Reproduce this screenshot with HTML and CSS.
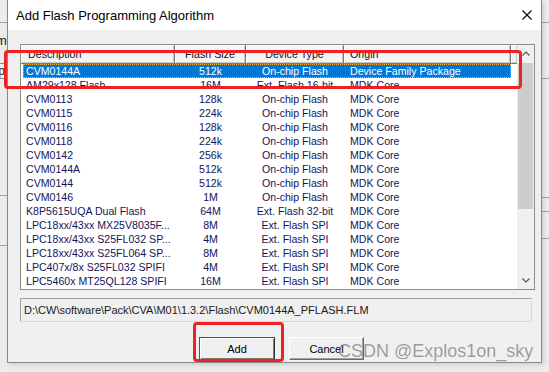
FILE: index.html
```html
<!DOCTYPE html>
<html lang="en">
<head>
  <meta charset="UTF-8" />
  <title>Add Flash Programming Algorithm</title>
  <link rel="stylesheet" href="styles.css">
</head>
<body>
  <div class="desk">
    <!-- bits of the window behind -->
    <div class="bg-line" style="left:0;top:22px;width:7px;"></div>
    <span class="bg-text" style="left:-4px;top:33px;">m</span>
    <div class="bg-box" style="left:-20px;top:63px;"><span>p</span></div>
    <div class="bg-line" style="left:0;top:195px;width:7px;"></div>
    <div class="bg-line" style="left:0;top:245px;width:7px;"></div>
    <div class="bg-line" style="left:542px;top:22px;width:7px;"></div>
    <div class="bg-line" style="left:542px;top:78px;width:7px;"></div>
    <div class="bg-line" style="left:542px;top:197px;width:7px;"></div>
    <div class="bg-line" style="left:542px;top:211px;width:7px;"></div>
    <div class="bg-line" style="left:542px;top:238px;width:7px;"></div>

    <div class="dialog">
      <div class="titlebar">
        <span class="title">Add Flash Programming Algorithm</span>
        <svg class="close" width="10" height="10" viewBox="0 0 10 10">
          <path d="M0.5 0.5 L9.5 9.5 M9.5 0.5 L0.5 9.5" stroke="#000" stroke-width="1.1" fill="none"/>
        </svg>
      </div>

      <div class="body">
        <div class="listbox">
          <div class="lv">
            <div class="hd">
              <div class="hc c1">Description</div>
              <div class="hc c2">Flash Size</div>
              <div class="hc c3">Device Type</div>
              <div class="hc c4">Origin</div>
              <div class="hc c5"></div>
            </div>
            <div class="rows">
              <div class="row sel"><span class="c1">CVM0144A</span><span class="c2">512k</span><span class="c3">On-chip Flash</span><span class="c4">Device Family Package</span></div>
              <div class="row"><span class="c1">AM29x128 Flash</span><span class="c2">16M</span><span class="c3">Ext. Flash 16-bit</span><span class="c4">MDK Core</span></div>
              <div class="row"><span class="c1">CVM0113</span><span class="c2">128k</span><span class="c3">On-chip Flash</span><span class="c4">MDK Core</span></div>
              <div class="row"><span class="c1">CVM0115</span><span class="c2">224k</span><span class="c3">On-chip Flash</span><span class="c4">MDK Core</span></div>
              <div class="row"><span class="c1">CVM0116</span><span class="c2">128k</span><span class="c3">On-chip Flash</span><span class="c4">MDK Core</span></div>
              <div class="row"><span class="c1">CVM0118</span><span class="c2">224k</span><span class="c3">On-chip Flash</span><span class="c4">MDK Core</span></div>
              <div class="row"><span class="c1">CVM0142</span><span class="c2">256k</span><span class="c3">On-chip Flash</span><span class="c4">MDK Core</span></div>
              <div class="row"><span class="c1">CVM0144A</span><span class="c2">512k</span><span class="c3">On-chip Flash</span><span class="c4">MDK Core</span></div>
              <div class="row"><span class="c1">CVM0144</span><span class="c2">512k</span><span class="c3">On-chip Flash</span><span class="c4">MDK Core</span></div>
              <div class="row"><span class="c1">CVM0146</span><span class="c2">1M</span><span class="c3">On-chip Flash</span><span class="c4">MDK Core</span></div>
              <div class="row"><span class="c1">K8P5615UQA Dual Flash</span><span class="c2">64M</span><span class="c3">Ext. Flash 32-bit</span><span class="c4">MDK Core</span></div>
              <div class="row"><span class="c1">LPC18xx/43xx MX25V8035F...</span><span class="c2">8M</span><span class="c3">Ext. Flash SPI</span><span class="c4">MDK Core</span></div>
              <div class="row"><span class="c1">LPC18xx/43xx S25FL032 SP...</span><span class="c2">4M</span><span class="c3">Ext. Flash SPI</span><span class="c4">MDK Core</span></div>
              <div class="row"><span class="c1">LPC18xx/43xx S25FL064 SP...</span><span class="c2">8M</span><span class="c3">Ext. Flash SPI</span><span class="c4">MDK Core</span></div>
              <div class="row"><span class="c1">LPC407x/8x S25FL032 SPIFI</span><span class="c2">4M</span><span class="c3">Ext. Flash SPI</span><span class="c4">MDK Core</span></div>
              <div class="row"><span class="c1">LPC5460x MT25QL128 SPIFI</span><span class="c2">16M</span><span class="c3">Ext. Flash SPI</span><span class="c4">MDK Core</span></div>
            </div>
          </div>
          <div class="sb">
            <div class="sb-btn">
              <svg width="8" height="5" viewBox="0 0 8 5"><path d="M0.5 4.5 L4 1 L7.5 4.5" stroke="#555" stroke-width="1.2" fill="none"/></svg>
            </div>
            <div class="sb-thumb"></div>
            <div class="sb-track"></div>
            <div class="sb-btn">
              <svg width="8" height="5" viewBox="0 0 8 5"><path d="M0.5 0.5 L4 4 L7.5 0.5" stroke="#555" stroke-width="1.2" fill="none"/></svg>
            </div>
          </div>
        </div>

        <div class="path">D:\CW\software\Pack\CVA\M01\1.3.2\Flash\CVM0144A_PFLASH.FLM</div>

        <div class="buttons">
          <button class="btn default">Add</button>
          <button class="btn">Cancel</button>
        </div>
      </div>
    </div>

    <!-- annotations on top of the screenshot -->
    <div class="mark mark-list"></div>
    <div class="mark mark-add"></div>
    <div class="watermark">CSDN @Explos1on_sky</div>
  </div>
</body>
</html>
```

FILE: styles.css
```css
body {
  margin: 0;
  font-family: "Liberation Sans", Arial, sans-serif;
}
.desk {
  position: relative;
  width: 549px;
  height: 372px;
  overflow: hidden;
  background: #ececec;
}
.bg-line {
  position: absolute;
  height: 1px;
  background: #a0a0a0;
}
.bg-text {
  position: absolute;
  font-size: 13px;
  color: #222;
}
.bg-box {
  position: absolute;
  width: 26px;
  height: 14px;
  border: 1px solid #8a8a8a;
  background: #f2f2f2;
  font-size: 12px;
  line-height: 14px;
  text-align: right;
  color: #222;
}
.bg-box span {
  margin-right: 2px;
}

.dialog {
  margin-left: 7px;
  width: 535px;
  height: 363px;
  box-sizing: border-box;
  border: 1px solid #8a8a8a;
  border-top: none;
  background: #f0f0f0;
  display: flex;
  flex-direction: column;
  box-shadow: 2px 2px 4px rgba(0,0,0,0.12);
  position: relative;
}
.titlebar {
  height: 30px;
  flex: none;
  background: #fff;
  display: flex;
  align-items: center;
  justify-content: space-between;
  padding: 0 9px 0 8px;
}
.title {
  font-size: 13px;
  color: #000;
}
.close {
  display: block;
}

.body {
  padding: 14px 0 0 12px;
  display: flex;
  flex-direction: column;
  font-size: 11px;
}

.listbox {
  width: 515px;
  height: 246px;
  box-sizing: border-box;
  border: 1px solid #8c8c8c;
  background: #fff;
  display: flex;
}
.lv {
  width: 496px;
}
.hd {
  display: flex;
  height: 19px;
  background: #f4f4f4;
}
.hc {
  box-sizing: border-box;
  height: 19px;
  line-height: 18px;
  font-size: 10.7px;
  color: #111;
  border-right: 1px solid #7a7a7a;
  border-bottom: 1px solid #7a7a7a;
  box-shadow: inset 1px 1px #fff, inset -1px -1px #c8c8c8;
}
.hd .c1 { width: 154px; padding-left: 7px; }
.hd .c2 { width: 71px; text-align: center; }
.hd .c3 { width: 98px; text-align: center; }
.hd .c4 { width: 167px; padding-left: 6px; }
.hd .c5 { width: 6px; border-right: none; }

.rows {
  padding-left: 2px;
}
.row {
  display: flex;
  height: 14px;
  line-height: 14px;
  width: 488px;
  font-size: 10.6px;
  color: #14145a;
  white-space: nowrap;
}
.row span {
  box-sizing: border-box;
  overflow: hidden;
}
.row .c1 { width: 152px; padding-left: 3px; }
.row .c2 { width: 71px; text-align: center; }
.row .c3 { width: 98px; text-align: center; }
.row .c4 { width: 167px; padding-left: 6px; }
.row.sel {
  background: #0078d7;
  color: #fff;
  outline: 1px dotted #f5b041;
  outline-offset: -1px;
}

.sb {
  width: 17px;
  background: #f0f0f0;
  display: flex;
  flex-direction: column;
}
.sb-btn {
  height: 17px;
  display: flex;
  align-items: center;
  justify-content: center;
}
.sb-thumb {
  margin: 1px 1px 0 1px;
  height: 146px;
  background: #cdcdcd;
}
.sb-track {
  flex: 1;
}

.path {
  margin-top: 8px;
  width: 512px;
  height: 24px;
  box-sizing: border-box;
  border: 1px solid #a0a0a0;
  border-right-color: #d8d8d8;
  border-bottom-color: #d8d8d8;
  padding-left: 3px;
  line-height: 22px;
  color: #1a1a1a;
}

.buttons {
  margin-top: 15px;
  display: flex;
  gap: 14px;
  padding-left: 179px;
}
.btn {
  width: 75px;
  height: 23px;
  box-sizing: border-box;
  font-family: "Liberation Sans", Arial, sans-serif;
  font-size: 11px;
  color: #000;
  background: #f0f0f0;
  border: 1px solid;
  border-color: #fff #696969 #696969 #fff;
  box-shadow: inset -1px -1px #a0a0a0;
  padding: 0;
}
.btn.default {
  width: 76px;
  border-color: #555 #333 #333 #555;
  box-shadow: inset 1px 1px #fff, inset -1px -1px #7a7a7a;
}

.mark {
  position: absolute;
  border: 3px solid #ee2222;
  border-radius: 4px;
  box-sizing: border-box;
}
.mark-list {
  left: 4px;
  top: 50px;
  width: 518px;
  height: 39px;
}
.mark-add {
  left: 193px;
  top: 322px;
  width: 91px;
  height: 40px;
}
.watermark {
  position: absolute;
  left: 338px;
  top: 341px;
  font-size: 18px;
  color: rgba(100,100,100,0.6);
  white-space: nowrap;
}
```
